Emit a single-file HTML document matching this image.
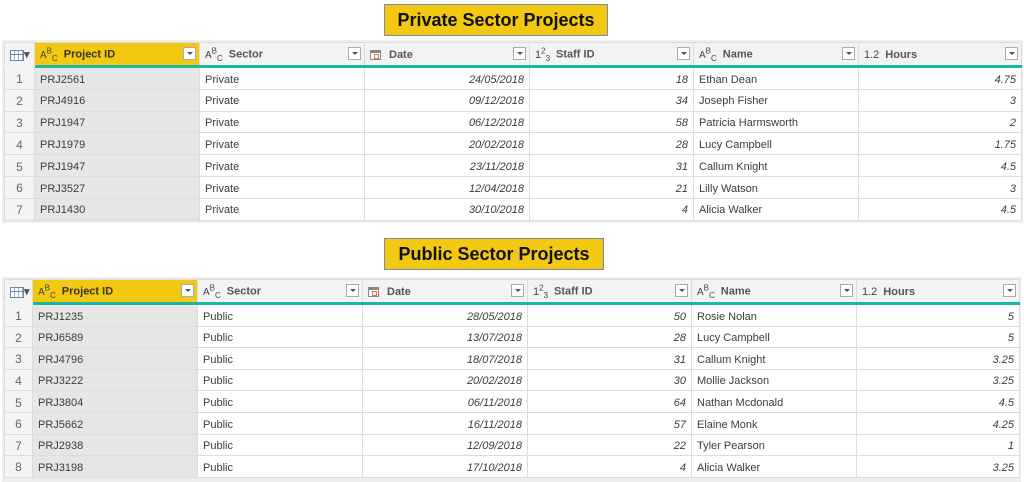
<!DOCTYPE html>
<html><head><meta charset="utf-8"><style>
body{margin:0;width:1024px;height:482px;background:#fff;position:relative;overflow:hidden;font-family:"Liberation Sans",sans-serif;}
.title{position:absolute;background:#f2c811;border:1px solid #7a8aa8;font-weight:bold;font-size:18px;color:#111;text-align:center;box-sizing:border-box;}
.wrap{position:absolute;background:#eeeeee;padding:2px 2px 3px 2px;box-sizing:border-box;}
table{border-collapse:collapse;table-layout:fixed;font-size:11px;color:#3c3c3c;}
td{border:1px solid #dcdcdc;padding:0 5px;white-space:nowrap;overflow:hidden;}
tr.h td{height:21px;background:#f3f3f3;border-bottom:3px solid #1bb5a2;font-weight:bold;color:#555;position:relative;padding-top:1px;}
tr.h td.y{background:#f2c811;color:#333;}
tr.h td.ix{background:#f3f3f3;border-bottom:3px solid #f3f3f3;}
tr.r td{height:18.3px;background:#fff;padding-top:2.5px;}
.t2 tr.r td{height:18.1px;}
tr.r td.ix{background:#f4f4f4;text-align:center;color:#666;font-size:12px;padding:2px 0 0 0;}
tr.r td.pid{background:#e6e6e6;}
td.n{text-align:right;font-style:italic;}
.dd{position:absolute;right:3px;top:4px;width:13px;height:13px;background:#fff;border:1px solid #aaa;box-sizing:border-box;}
.dd:after{content:"";position:absolute;left:3px;top:4px;border-left:3px solid transparent;border-right:3px solid transparent;border-top:3px solid #555;}
.ic{font-weight:normal;color:#444;margin-right:6px;font-size:10px;}
.ic sup{font-size:8px;} .ic sub{font-size:8px;}
.cal{display:inline-block;width:11px;height:10px;border:1px solid #888;border-top:3px solid #888;box-sizing:border-box;vertical-align:middle;margin-right:8px;background:#fff;position:relative;}
.cal:after{content:"";position:absolute;left:3px;top:1px;width:3px;height:3px;border:1px solid #e07a3a;}
.grid{display:inline-block;width:14px;height:11px;border:1px solid #6b86b0;box-sizing:border-box;background:linear-gradient(#6b86b0,#6b86b0) 0 3px/100% 1px no-repeat,repeating-linear-gradient(90deg,transparent 0 3px,#9fb0cc 3px 4px),#fff;vertical-align:middle;}
</style></head><body>

<div class="title" style="left:384px;top:4px;width:224px;height:32px;line-height:30px;">Private Sector Projects</div>
<div class="wrap" style="left:2px;top:40px;width:1021px;height:183px;">
<table style="width:1017px">
<colgroup><col style="width:30px"><col style="width:165px"><col style="width:165px"><col style="width:165px"><col style="width:164px"><col style="width:165px"><col style="width:163px"></colgroup>
<tr class="h"><td class="ix"><span class="grid"></span>▾</td><td class="y"><span class="ic">A<sup>B</sup><sub>C</sub></span>Project ID<span class="dd"></span></td><td><span class="ic">A<sup>B</sup><sub>C</sub></span>Sector<span class="dd"></span></td><td><span class="cal"></span>Date<span class="dd"></span></td><td><span class="ic" style="font-size:11px">1<sup>2</sup><sub>3</sub></span>Staff ID<span class="dd"></span></td><td><span class="ic">A<sup>B</sup><sub>C</sub></span>Name<span class="dd"></span></td><td><span class="ic" style="font-size:11px">1.2</span>Hours<span class="dd"></span></td></tr>
<tr class="r"><td class="ix">1</td><td class="pid">PRJ2561</td><td>Private</td><td class="n">24/05/2018</td><td class="n">18</td><td>Ethan Dean</td><td class="n">4.75</td></tr>
<tr class="r"><td class="ix">2</td><td class="pid">PRJ4916</td><td>Private</td><td class="n">09/12/2018</td><td class="n">34</td><td>Joseph Fisher</td><td class="n">3</td></tr>
<tr class="r"><td class="ix">3</td><td class="pid">PRJ1947</td><td>Private</td><td class="n">06/12/2018</td><td class="n">58</td><td>Patricia Harmsworth</td><td class="n">2</td></tr>
<tr class="r"><td class="ix">4</td><td class="pid">PRJ1979</td><td>Private</td><td class="n">20/02/2018</td><td class="n">28</td><td>Lucy Campbell</td><td class="n">1.75</td></tr>
<tr class="r"><td class="ix">5</td><td class="pid">PRJ1947</td><td>Private</td><td class="n">23/11/2018</td><td class="n">31</td><td>Callum Knight</td><td class="n">4.5</td></tr>
<tr class="r"><td class="ix">6</td><td class="pid">PRJ3527</td><td>Private</td><td class="n">12/04/2018</td><td class="n">21</td><td>Lilly Watson</td><td class="n">3</td></tr>
<tr class="r"><td class="ix">7</td><td class="pid">PRJ1430</td><td>Private</td><td class="n">30/10/2018</td><td class="n">4</td><td>Alicia Walker</td><td class="n">4.5</td></tr>
</table></div>

<div class="title" style="left:384px;top:238px;width:220px;height:32px;line-height:30px;">Public Sector Projects</div>
<div class="wrap t2" style="left:2px;top:277px;width:1019px;height:205px;">
<table style="width:1015px">
<colgroup><col style="width:28px"><col style="width:165px"><col style="width:165px"><col style="width:165px"><col style="width:164px"><col style="width:165px"><col style="width:163px"></colgroup>
<tr class="h"><td class="ix"><span class="grid"></span>▾</td><td class="y"><span class="ic">A<sup>B</sup><sub>C</sub></span>Project ID<span class="dd"></span></td><td><span class="ic">A<sup>B</sup><sub>C</sub></span>Sector<span class="dd"></span></td><td><span class="cal"></span>Date<span class="dd"></span></td><td><span class="ic" style="font-size:11px">1<sup>2</sup><sub>3</sub></span>Staff ID<span class="dd"></span></td><td><span class="ic">A<sup>B</sup><sub>C</sub></span>Name<span class="dd"></span></td><td><span class="ic" style="font-size:11px">1.2</span>Hours<span class="dd"></span></td></tr>
<tr class="r"><td class="ix">1</td><td class="pid">PRJ1235</td><td>Public</td><td class="n">28/05/2018</td><td class="n">50</td><td>Rosie Nolan</td><td class="n">5</td></tr>
<tr class="r"><td class="ix">2</td><td class="pid">PRJ6589</td><td>Public</td><td class="n">13/07/2018</td><td class="n">28</td><td>Lucy Campbell</td><td class="n">5</td></tr>
<tr class="r"><td class="ix">3</td><td class="pid">PRJ4796</td><td>Public</td><td class="n">18/07/2018</td><td class="n">31</td><td>Callum Knight</td><td class="n">3.25</td></tr>
<tr class="r"><td class="ix">4</td><td class="pid">PRJ3222</td><td>Public</td><td class="n">20/02/2018</td><td class="n">30</td><td>Mollie Jackson</td><td class="n">3.25</td></tr>
<tr class="r"><td class="ix">5</td><td class="pid">PRJ3804</td><td>Public</td><td class="n">06/11/2018</td><td class="n">64</td><td>Nathan Mcdonald</td><td class="n">4.5</td></tr>
<tr class="r"><td class="ix">6</td><td class="pid">PRJ5662</td><td>Public</td><td class="n">16/11/2018</td><td class="n">57</td><td>Elaine Monk</td><td class="n">4.25</td></tr>
<tr class="r"><td class="ix">7</td><td class="pid">PRJ2938</td><td>Public</td><td class="n">12/09/2018</td><td class="n">22</td><td>Tyler Pearson</td><td class="n">1</td></tr>
<tr class="r"><td class="ix">8</td><td class="pid">PRJ3198</td><td>Public</td><td class="n">17/10/2018</td><td class="n">4</td><td>Alicia Walker</td><td class="n">3.25</td></tr>
</table></div>
</body></html>
